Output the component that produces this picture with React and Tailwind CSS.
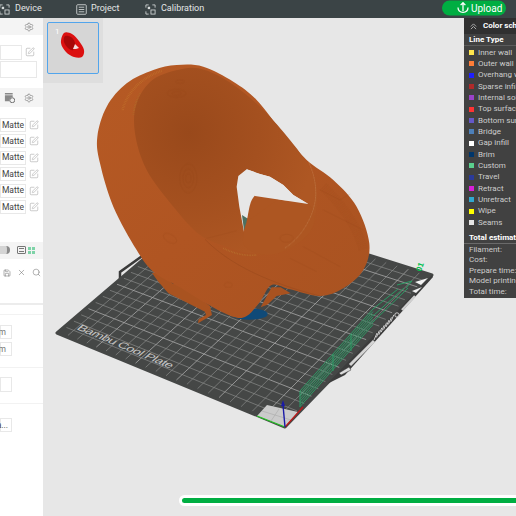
import React from 'react';
import { Settings, SquarePen, X, Search, Save } from 'lucide-react';

const LINE_TYPES = [
  ['Inner wall', '#ffe64d'],
  ['Outer wall', '#ff7d38'],
  ['Overhang wall', '#1f1fff'],
  ['Sparse infill', '#b02a2a'],
  ['Internal solid', '#9a42c8'],
  ['Top surface', '#ff3333'],
  ['Bottom surface', '#6458c8'],
  ['Bridge', '#4d80ba'],
  ['Gap infill', '#ffffff'],
  ['Brim', '#00366b'],
  ['Custom', '#5ad08e'],
  ['Travel', '#2a3a9a'],
  ['Retract', '#d81fd8'],
  ['Unretract', '#30a8d0'],
  ['Wipe', '#ffff00'],
  ['Seams', '#e6e6e6'],
];

const ESTIMATES = ['Filament:', 'Cost:', 'Prepare time:', 'Model printing time:', 'Total time:'];

// plate corners on screen, used to project the bed grid
const A = [57, 333];
const B = [285, 427];
const C = [432, 275];
const D = [208, 204];

function makeProjector() {
  const dx1 = B[0] - C[0];
  const dx2 = D[0] - C[0];
  const sx = A[0] - B[0] + C[0] - D[0];
  const dy1 = B[1] - C[1];
  const dy2 = D[1] - C[1];
  const sy = A[1] - B[1] + C[1] - D[1];
  const den = dx1 * dy2 - dx2 * dy1;
  const g = (sx * dy2 - dx2 * sy) / den;
  const h = (dx1 * sy - sx * dy1) / den;
  const a = B[0] - A[0] + g * B[0];
  const b = D[0] - A[0] + h * D[0];
  const d = B[1] - A[1] + g * B[1];
  const e = D[1] - A[1] + h * D[1];
  return (u, v) => {
    const w = g * u + h * v + 1;
    return [(a * u + b * v + A[0]) / w, (d * u + e * v + A[1]) / w];
  };
}

// closed catmull-rom curve through the traced outline points
function smooth(pts) {
  const n = pts.length;
  let out = `M${pts[0][0]} ${pts[0][1]}`;
  for (let i = 0; i < n; i++) {
    const p0 = pts[(i - 1 + n) % n];
    const p1 = pts[i];
    const p2 = pts[(i + 1) % n];
    const p3 = pts[(i + 2) % n];
    const c1x = p1[0] + (p2[0] - p0[0]) / 6;
    const c1y = p1[1] + (p2[1] - p0[1]) / 6;
    const c2x = p2[0] - (p3[0] - p1[0]) / 6;
    const c2y = p2[1] - (p3[1] - p1[1]) / 6;
    out += `C${c1x} ${c1y} ${c2x} ${c2y} ${p2[0]} ${p2[1]}`;
  }
  return out + 'Z';
}

const OUTER = [
  [260, 45], [340, 50], [430, 95], [500, 150], [580, 250], [650, 330], [730, 390], [800, 470],
  [838, 580], [820, 660], [760, 715], [690, 738], [600, 718], [545, 705], [510, 755], [470, 798],
  [429, 800], [351, 762], [270, 712], [190, 665], [140, 600], [70, 470], [30, 340], [22, 260],
  [50, 170], [110, 100], [190, 60],
];

const BOWL = [
  [280, 56], [345, 60], [430, 104], [520, 180], [600, 270], [650, 340], [680, 420], [670, 510],
  [620, 580], [560, 610], [480, 610], [410, 590], [330, 555], [250, 470], [170, 360], [135, 250],
  [140, 160], [190, 88],
];

const FLAP = [
  [495, 438], [575, 450], [655, 462], [674, 505], [660, 545], [620, 583], [560, 611], [500, 610], [462, 585], [462, 545], [470, 515],
];

const project = makeProjector();
const CELLS = 22;
const gridSteps = Array.from({ length: CELLS - 1 }, (_, i) => i + 1);

const BedGrid = () => (
  <g>
    {gridSteps.map((i) => {
      const t = i / CELLS;
      const major = i % 4 === 0;
      const p1 = project(t, 0.01);
      const p2 = project(t, 0.99);
      const q1 = project(0.01, t);
      const q2 = project(0.99, t);
      const stroke = major ? '#a8a8a8' : '#8a8b8a';
      const width = major ? 0.8 : 0.7;
      return (
        <g key={i} stroke={stroke} strokeWidth={width}>
          <line x1={p1[0]} y1={p1[1]} x2={p2[0]} y2={p2[1]} />
          <line x1={q1[0]} y1={q1[1]} x2={q2[0]} y2={q2[1]} />
        </g>
      );
    })}
  </g>
);

const TOWER_ROWS = [0, 2.6, 5.2, 7.8, 10.4, 13, 15.6];

const WipeTower = () => (
  <g stroke="#2c9a64" strokeWidth="1" fill="none">
    {TOWER_ROWS.map((o) => (
      <line key={o} x1={300} y1={391 + o} x2={373} y2={309 + o} />
    ))}
    <line x1="373" y1="309" x2="398" y2="289" />
    <line x1="373" y1="316" x2="404" y2="288" />
    <line x1="373" y1="322" x2="408" y2="288" />
    <path d="M397 285l15-4 -6 7M300 391v16M333 354v17M351 334v17" />
  </g>
);

const Scene = () => (
  <svg className="absolute left-0 top-0" width="516" height="516" viewBox="0 0 516 516">
    <defs>
      <radialGradient id="bowl" cx="0.3" cy="0.35" r="0.7">
        <stop offset="0" stopColor="#99491b" />
        <stop offset="0.55" stopColor="#a4501f" />
        <stop offset="1" stopColor="#ae5723" />
      </radialGradient>
      <linearGradient id="rim" x1="0" y1="0" x2="1" y2="1">
        <stop offset="0" stopColor="#b65a24" />
        <stop offset="0.5" stopColor="#b05522" />
        <stop offset="1" stopColor="#a95321" />
      </linearGradient>
    </defs>

    {/* build plate */}
    <polyline points="120,279 120,272 145,254" fill="none" stroke="#3a3a3a" strokeWidth="2.5" />
    <line x1="130" y1="273" x2="145" y2="263" stroke="#e0e0e0" strokeWidth="1" />
    <polygon
      points={`${A.join(',')} ${B.join(',')} ${C.join(',')} ${D.join(',')}`}
      fill="#454746"
      stroke="#454746"
      strokeWidth="3"
      strokeLinejoin="round"
    />
    <BedGrid />
    <polygon points="345,365 432,275 433,277 345,375 327,384" fill="#3c3c3c" />

    {/* plate markings on the right side */}
    <line x1="350" y1="365" x2="374" y2="341" stroke="#d4d4d4" strokeWidth="3" />
    <path d="M339 373l10-6 2 3 -10 5z" fill="#dcdcdc" stroke="#333" strokeWidth="0.5" />
    <g stroke="#cfcfcf" strokeWidth="1">
      {[0, 1, 2, 3, 4, 5, 6, 7].map((i) => (
        <line key={i} x1={374 + i * 2.4} y1={340 - i * 2.6} x2={377 + i * 2.4} y2={333 - i * 2.6} />
      ))}
    </g>
    <circle cx="397" cy="315" r="2.2" fill="none" stroke="#cfcfcf" strokeWidth="1" />
    <line x1="402" y1="310" x2="415" y2="296" stroke="#cfcfcf" strokeWidth="2.5" />
    <polygon points="412,291 422,287 416,293" fill="#f2f2f2" />
    <polygon points="415,282 428,278 421,285" fill="#f2f2f2" />

    <polygon points="267,405 257,416 285,427 298,412" fill="#cbcbcb" />
    <g stroke="#a9a9a9" strokeWidth="0.6">
      <line x1="262" y1="411" x2="291" y2="420" />
      <line x1="279" y1="409" x2="271" y2="421" />
    </g>

    <WipeTower />

    {/* printed label, kept as live text */}
    <text
      transform="matrix(0.92 0.39 -0.6 0.52 76 329)"
      fontFamily="'Liberation Sans', sans-serif"
      fontSize="13.5"
      fill="#c4c4c4"
      textLength="102"
    >
      Bambu Cool Plate
    </text>
    <text
      transform="translate(421 272) rotate(-70)"
      fontFamily="'Liberation Sans', sans-serif"
      fontSize="8"
      fontWeight="700"
      fill="#00c04e"
    >
      01
    </text>

    {/* axes */}
    <line x1="257" y1="416" x2="285" y2="427" stroke="#22c322" strokeWidth="1.2" />
    <line x1="285" y1="427" x2="303" y2="407" stroke="#c01818" strokeWidth="1.2" />
    <line x1="285" y1="427" x2="283" y2="405" stroke="#1a1aa8" strokeWidth="1.4" />
    <polygon points="283,400 281,406 285,406" fill="#1a1aa8" />

    {/* printed model, drawn in a 3x space */}
    <g transform="translate(90 50) scale(0.3333)">
      <ellipse cx="478" cy="792" rx="55" ry="17" fill="#0f4a78" />
      <path d="M545 712L512 772 532 764 560 738 602 730 572 712Z" fill="#a85220" />
      <path
        d="M186 669L219 664 246 700 279 708 360 768 366 795 324 820 326 808 348 795 345 785 235 730 205 695Z"
        fill="#a95320"
      />
      <path d={smooth(OUTER)} fill="url(#rim)" />
      <path d={smooth(BOWL)} fill="url(#bowl)" />
      {/* hole through the bowl */}
      <polygon
        points="470,358 510,372 540,380 580,405 610,435 655,462 495,438 470,515 462,545 448,470 440,410 445,378"
        fill="#e7e7e7"
      />
      <polygon points="456,495 476,508 468,540 462,540" fill="#4c6f5f" />
      {/* flap that closes the lower part of the opening */}
      <path d={smooth(FLAP)} fill="#ad5622" />
      <polygon points="495,436 655,462 575,440 470,516" fill="#ad5622" />
      <polygon points="470,358 510,372 540,380 580,405 610,435 655,462 495,438" fill="#e7e7e7" />
      {/* crease under the rim */}
      <path d="M345 568C400 625 500 690 690 738" fill="none" stroke="#9a4a1c" strokeWidth="3" opacity="0.6" />
      {/* layer moire */}
      <g fill="none" stroke="#8e4419" strokeWidth="1.2" opacity="0.35">
        <ellipse cx="295" cy="385" rx="8" ry="14" />
        <ellipse cx="295" cy="385" rx="16" ry="28" />
        <ellipse cx="295" cy="385" rx="26" ry="44" />
        <ellipse cx="260" cy="130" rx="14" ry="6" />
        <ellipse cx="260" cy="130" rx="28" ry="12" />
        <ellipse cx="270" cy="95" rx="14" ry="5" />
        <ellipse cx="415" cy="705" rx="12" ry="8" />
        <ellipse cx="240" cy="565" rx="22" ry="12" transform="rotate(30 240 565)" />
        <ellipse cx="590" cy="565" rx="20" ry="12" />
        <path d="M690 420l60 30 30-18M700 480l120 60M640 590l110 60M600 625l80 40M350 565l60-15 30-8" />
      </g>
      {/* rough rim speckle */}
      <g fill="none">
        <path d="M215 62C150 85 110 130 97 182" stroke="#c7782f" strokeWidth="8" strokeDasharray="2 3" opacity="0.6" />
        <path d="M150 130C140 150 132 170 130 196" stroke="#a9782f" strokeWidth="6" strokeDasharray="2 3" opacity="0.5" />
        <path d="M655 335C675 375 683 425 673 465 665 505 633 565 583 595" stroke="#d6a878" strokeWidth="1.6" strokeDasharray="3 2" opacity="0.7" />
        <path d="M400 595C430 609 460 619 500 615" stroke="#c08a3a" strokeWidth="5" strokeDasharray="2 3" opacity="0.5" />
        <path d="M700 410C750 460 800 520 820 600" stroke="#8e4419" strokeWidth="28" strokeDasharray="2 4" opacity="0.18" />
      </g>
    </g>
  </svg>
);

const DeviceIcon = () => (
  <svg className="h-[11px] w-[11px]" viewBox="0 0 12 12" fill="none" stroke="#d8dcdc" strokeWidth="0.9">
    <path d="M1 4V1h3M11 4V1H8M1 8v3h3" />
    <rect x="3" y="3" width="2.6" height="2.6" fill="#d8dcdc" stroke="none" />
    <rect x="6.5" y="6.5" width="4.5" height="4.5" />
  </svg>
);

const ProjectIcon = () => (
  <svg className="h-[11px] w-[11px]" viewBox="0 0 12 12" fill="none" stroke="#d8dcdc" strokeWidth="0.9">
    <rect x="0.8" y="0.8" width="10.4" height="10.4" rx="1" />
    <path d="M3 3.5h6M3 6h6M3 8.5h6" />
  </svg>
);

const UploadIcon = () => (
  <svg className="h-[12px] w-[12px]" viewBox="0 0 12 12" fill="none" stroke="#ffffff" strokeWidth="1.3">
    <path d="M6 9.5V1.5M3.6 3.6L6 1.2l2.4 2.4" />
    <path d="M1 6c0 3 2 4.8 5 4.8S11 9 11 6" />
  </svg>
);

const PrinterSyncIcon = () => (
  <svg className="h-[11px] w-[11px]" viewBox="0 0 12 12" fill="#666" stroke="none">
    <path d="M1 1h8.5v1.8H1zM1 3.6h8.5v2.2a3.4 3.4 0 0 0-3.6 4.4H1z" fillOpacity="0.75" />
    <circle cx="9" cy="9" r="2.7" fill="none" stroke="#666" strokeWidth="1" />
  </svg>
);

const NavItem = ({ icon, label, className }) => (
  <div className={`flex items-center ${className}`}>
    {icon}
    <span>{label}</span>
  </div>
);

const TopBar = () => (
  <div className="flex h-[18px] items-center bg-[#3b4446] text-[9px] text-[#e4e6e6]">
    <NavItem className="-ml-[1px] w-[77px] gap-[5px]" icon={<DeviceIcon />} label="Device" />
    <NavItem className="w-[69px] gap-[4px]" icon={<ProjectIcon />} label="Project" />
    <NavItem className="gap-[5px]" icon={<DeviceIcon />} label="Calibration" />
    <div className="ml-auto mr-[10px] flex h-[15px] w-[64px] -translate-y-[1.5px] items-center gap-[2px] rounded-full bg-[#00ae42] pl-[15px] text-[10px] text-white">
      <UploadIcon />
      <span>Upload</span>
    </div>
  </div>
);

const EditIcon = () => <SquarePen className="h-[10px] w-[10px] text-[#a0a0a0]" strokeWidth={1.3} />;

const Box = ({ className = '', children }) => (
  <div className={`flex items-center justify-end border border-[#e8e8e8] bg-white text-[#5a5a5a] ${className}`}>
    {children}
  </div>
);

const MATTE_ROWS = [0, 1, 2, 3, 4, 5];

const Sidebar = () => (
  <div className="flex w-[43px] flex-col overflow-hidden bg-white text-[8.5px]">
    <div className="flex h-[17px] items-center justify-end bg-[#f4f4f4] pr-[9px]">
      <Settings className="h-[10px] w-[10px] text-[#666]" strokeWidth={1.3} />
    </div>
    <div className="mt-[9px] flex h-[16px] items-center gap-[3px]">
      <Box className="h-[15px] w-[22px]" />
      <EditIcon />
    </div>
    <Box className="mt-[1px] h-[17px] w-[37px]" />
    <div className="mt-[10px] flex h-[19px] items-center justify-end gap-[9px] bg-[#f4f4f4] pr-[9px]">
      <PrinterSyncIcon />
      <Settings className="h-[10px] w-[10px] text-[#666]" strokeWidth={1.3} />
    </div>
    <div className="mt-[11px] flex flex-col gap-[2.4px]">
      {MATTE_ROWS.map((i) => (
        <div key={i} className="flex h-[14px] items-center gap-[3px]">
          <Box className="h-[14px] w-[26px] pr-[1px] text-[#444]">Matte</Box>
          <EditIcon />
        </div>
      ))}
    </div>
    <div className="mt-[28px] flex h-[17px] items-center bg-[#f4f4f4]">
      <div className="-ml-[4px] h-[8px] w-[14px] rounded-full border-r-[3px] border-[#8a8a8a] bg-[#d4d4d4]" />
      <div className="ml-[7px] flex h-[8px] w-[9px] flex-col justify-around rounded-[1px] border border-[#777] px-[1px]">
        <div className="h-px bg-[#777]" />
        <div className="h-px bg-[#777]" />
      </div>
      <div className="ml-[2px] grid h-[7px] w-[7px] grid-cols-2 gap-px">
        <div className="bg-[#7fd3a8]" />
        <div className="bg-[#7fd3a8]" />
        <div className="bg-[#7fd3a8]" />
        <div className="bg-[#7fd3a8]" />
      </div>
    </div>
    <div className="mt-[9px] flex h-[10px] items-center gap-[6px] pl-[3px]">
      <Save className="h-[8px] w-[8px] text-[#666]" strokeWidth={1.5} />
      <X className="h-[9px] w-[9px] text-[#666]" strokeWidth={1.3} />
      <Search className="h-[9px] w-[9px] text-[#666]" strokeWidth={1.3} />
    </div>
    <div className="mt-[25px] h-[2px] shrink-0 bg-[#ececec]" />
    <div className="mt-[9px] h-px shrink-0 bg-[#f2f2f2]" />
    <Box className="mt-[10px] h-[14px] w-[12px] pr-[5px] text-[#777]">m</Box>
    <Box className="mt-[3px] h-[14px] w-[12px] pr-[5px] text-[#777]">m</Box>
    <div className="mt-[11px] h-px shrink-0 bg-[#f2f2f2]" />
    <Box className="mt-[9px] h-[15px] w-[12px]" />
    <div className="mt-[11px] h-px shrink-0 bg-[#f2f2f2]" />
    <Box className="mt-[14px] h-[14px] w-[12px] pr-[3px] text-[#444]">a...</Box>
  </div>
);

const Thumbnail = () => (
  <div className="absolute left-0 top-0 h-[65px] w-[60px] bg-[#dedede] p-[4px]">
    <div className="relative h-[52px] w-[52px] rounded-[2px] border border-[#52a5ec] bg-[#d6d6d6]">
      <span className="absolute left-[7px] top-[5px] text-[8px] leading-none text-white">1</span>
      <svg className="absolute left-0 top-0" width="50" height="50" viewBox="0 0 50 50">
        <path
          d={smooth([[16, 10], [24, 11], [31, 18], [36, 27], [34, 34], [26, 34], [18, 29], [13, 20]])}
          fill="#dc1010"
        />
        <path d={smooth([[17, 13], [23, 14], [27, 20], [25, 27], [20, 25], [16, 19]])} fill="#a80808" />
        <path d="M27 21l4 4-3 1-3 0z" fill="#f3dede" />
      </svg>
    </div>
  </div>
);

const ColorScheme = () => (
  <div className="absolute right-0 top-0 flex h-[280px] w-[52px] flex-col overflow-hidden whitespace-nowrap bg-[#414141] text-[8px] text-[#cdcdcd]">
    <div className="flex h-[16px] shrink-0 items-center gap-[6px] bg-[#303030] pl-[6px] font-bold text-white">
      <svg className="h-[7px] w-[7px] shrink-0" viewBox="0 0 8 8" fill="none" stroke="#bbb" strokeWidth="1">
        <path d="M1 4l3-3 3 3M1 7l3-3 3 3" />
      </svg>
      <span>Color scheme</span>
    </div>
    <div className="flex h-[12px] shrink-0 items-center border-b border-[#5c5c5c] pl-[5px] font-bold text-white">
      Line Type
    </div>
    <div className="mt-[1px] flex flex-col">
      {LINE_TYPES.map(([name, color]) => (
        <div key={name} className="flex h-[11.33px] items-center gap-[4px] pl-[5px]">
          <div className="h-[5px] w-[5px] shrink-0" style={{ backgroundColor: color }} />
          <span>{name}</span>
        </div>
      ))}
    </div>
    <div className="mt-[5px] flex h-[11px] shrink-0 items-center border-b border-[#6a6a6a] pl-[5px] font-bold text-white">
      Total estimation
    </div>
    <div className="flex flex-col pl-[5px]">
      {ESTIMATES.map((name) => (
        <div key={name} className="flex h-[10.5px] items-center">
          {name}
        </div>
      ))}
    </div>
  </div>
);

export default function App() {
  return (
    <div
      className="flex h-[516px] w-[516px] flex-col overflow-hidden bg-[#e7e7e7]"
      style={{ fontFamily: "Roboto, sans-serif" }}
    >
      <TopBar />
      <div className="flex flex-1">
        <Sidebar />
        <div className="relative flex-1">
          <div className="absolute -left-[43px] -top-[18px] h-[516px] w-[516px]">
            <Scene />
          </div>
          <Thumbnail />
          <ColorScheme />
          {/* slicing progress */}
          <div className="absolute left-[136px] top-[477px] flex h-[11px] w-[360px] items-center rounded-full bg-white px-[3px]">
            <div className="h-[5px] w-full rounded-full bg-[#00ae42]" />
          </div>
        </div>
      </div>
    </div>
  );
}
